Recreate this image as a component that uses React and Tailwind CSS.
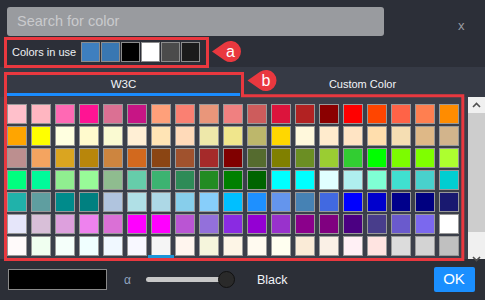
import React from "react";

const ROWS = [
  ["#FFC0CB","#FFB6C1","#FF69B4","#FF1493","#DB7093","#C71585","#FFA07A","#FA8072","#E9967A","#F08080","#CD5C5C","#DC143C","#B22222","#8B0000","#FF0000","#FF4500","#FF6347","#FF7F50","#FF8C00"],
  ["#FFA500","#FFFF00","#FFFFE0","#FFFACD","#FAFAD2","#FFEFD5","#FFE4B5","#FFDAB9","#EEE8AA","#F0E68C","#BDB76B","#FFD700","#FFF8DC","#FFEBCD","#FFE4C4","#FFDEAD","#F5DEB3","#DEB887","#D2B48C"],
  ["#BC8F8F","#F4A460","#DAA520","#B8860B","#CD853F","#D2691E","#8B4513","#A0522D","#A52A2A","#800000","#556B2F","#808000","#6B8E23","#9ACD32","#32CD32","#00FF00","#7CFC00","#7FFF00","#ADFF2F"],
  ["#00FF7F","#00FA9A","#90EE90","#98FB98","#8FBC8F","#66CDAA","#3CB371","#2E8B57","#228B22","#008000","#006400","#00FFFF","#00FFFF","#E0FFFF","#AFEEEE","#7FFFD4","#40E0D0","#48D1CC","#00CED1"],
  ["#20B2AA","#5F9EA0","#008B8B","#008080","#B0C4DE","#B0E0E6","#ADD8E6","#87CEEB","#87CEFA","#00BFFF","#1E90FF","#6495ED","#4682B4","#4169E1","#0000FF","#0000CD","#00008B","#000080","#191970"],
  ["#E6E6FA","#D8BFD8","#DDA0DD","#EE82EE","#DA70D6","#FF00FF","#FF00FF","#BA55D3","#9370DB","#8A2BE2","#9400D3","#9932CC","#8B008B","#800080","#4B0082","#483D8B","#6A5ACD","#7B68EE","#FFFFFF"],
  ["#FFFAFA","#F0FFF0","#F5FFFA","#F0FFFF","#F0F8FF","#F8F8FF","#F5F5F5","#FFF5EE","#F5F5DC","#FDF5E6","#FFFAF0","#FFFFF0","#FAEBD7","#FAF0E6","#FFF0F5","#FFE4E1","#DCDCDC","#D3D3D3","#C0C0C0"],
  ["#A9A9A9","#808080","#696969","#778899","#708090","#2F4F4F","#000000","#A9A9A9","#808080","#696969","#778899","#708090","#2F4F4F","#000000","#A9A9A9","#808080","#696969","#778899","#708090"],
];

const IN_USE = ["#3e7fbf", "#3977b2", "#000000", "#ffffff", "#4b4b4b", "#1b1b1b"];

function Badge({ cx, cy, r, label }) {
  const tip = cx - 18.5;
  const cos = r / 18.5;
  const sin = Math.sqrt(1 - cos * cos);
  const px = cx - r * cos;
  const y1 = cy - r * sin;
  const y2 = cy + r * sin;
  return (
    <g>
      <path
        d={`M${tip} ${cy} L${px} ${y1} A${r} ${r} 0 1 1 ${px} ${y2} Z`}
        fill="#e9383f"
      />
      <text
        x={cx}
        y={cy + 5.5}
        textAnchor="middle"
        fill="#ffffff"
        fontSize="16"
        fontFamily="'Liberation Sans', Arial, sans-serif"
      >
        {label}
      </text>
    </g>
  );
}

export default function App() {
  return (
    <div className="relative w-[485px] h-[300px] overflow-hidden bg-[#2c2f38] font-['Liberation_Sans',Arial,sans-serif]">
      {/* search row */}
      <div className="h-[36px] flex items-start pt-[7px] pl-[7px]">
        <div className="w-[377px] h-[29px] rounded-[3px] bg-[#999b9f] flex items-center pl-[10px] text-[14.5px] text-[#c9cacd]">
          Search for color
        </div>
        <div className="ml-[74px] mt-[12px] text-[13px] leading-[13px] text-[#9a9ca3]">x</div>
      </div>

      {/* colors in use */}
      <div className="h-[31px] flex items-start pt-[6px] pl-[12px]">
        <span className="text-[11px] leading-[20px] text-[#eef0f4]">Colors in use</span>
        <div className="ml-[5px] flex gap-[1px]">
          {IN_USE.map((c, i) => (
            <div
              key={i}
              className="w-[19px] h-[20px] border border-[#8c8c8c]"
              style={{ backgroundColor: c }}
            />
          ))}
        </div>
      </div>

      {/* tabs */}
      <div className="h-[30px] bg-[#363a45] flex pl-[7px]">
        <div className="relative w-[233px] pt-[10px] text-center text-[11.5px] leading-[14px] text-[#f2f4f8]">
          W3C
          <div className="absolute left-0 right-0 bottom-[1px] h-[3px] bg-[#1a8cff]" />
        </div>
        <div className="flex-1 pt-[10px] text-center text-[11px] leading-[14px] text-[#f2f4f8]">
          Custom Color
        </div>
      </div>

      {/* grid + scrollbar */}
      <div className="h-[162px] flex bg-[#3b3f4a]">
        <div className="w-[468px] h-full overflow-hidden pl-[7px] pt-[7px]">
          <div className="grid grid-cols-[repeat(19,20px)] gap-x-[4px] gap-y-[2px]">
            {ROWS.flatMap((row, ri) =>
              row.map((c, ci) => (
                <div
                  key={`${ri}-${ci}`}
                  className={
                    ri === 7 && ci === 6
                      ? "w-[20px] h-[20px] border border-[#999999] outline-[3px] outline-solid outline-[#1c95d8]"
                      : "w-[20px] h-[20px] border border-[#999999]"
                  }
                  style={{ backgroundColor: c }}
                />
              ))
            )}
          </div>
        </div>
        <div className="w-[17px] h-full flex flex-col bg-[#f0f0f0]">
          <div className="h-[16px] flex items-center justify-center">
            <svg width="9" height="6" viewBox="0 0 9 6">
              <path d="M1 5 L4.5 1.5 L8 5" stroke="#505050" strokeWidth="1.6" fill="none" />
            </svg>
          </div>
          <div className="h-[119px] bg-[#cdcdcd]" />
          <div className="relative flex-1">
            <svg className="absolute left-[4px] bottom-[-3px]" width="9" height="6" viewBox="0 0 9 6">
              <path d="M1 1 L4.5 4.5 L8 1" stroke="#505050" strokeWidth="1.6" fill="none" />
            </svg>
          </div>
        </div>
      </div>

      {/* bottom bar */}
      <div className="h-[41px] flex items-center pl-[8px] bg-[#2c2f37]">
        <div className="w-[99px] h-[21px] bg-black border border-[#8a8a8a]" />
        <span className="ml-[17px] text-[12px] leading-[12px] text-[#8fa3bf]">α</span>
        <div className="relative ml-[15px] w-[91px] h-[17px] flex items-center">
          <div className="w-[82px] h-[5px] rounded-full bg-[#c8c8c8]" />
          <div className="absolute left-[72px] top-0 w-[17px] h-[17px] rounded-full bg-[#2a2a2a] border border-[#111111]" />
        </div>
        <span className="ml-[20px] text-[12.5px] leading-[14px] text-[#f2f4f8]">Black</span>
        <div className="ml-[146px] w-[41px] h-[25px] rounded-[2px] bg-[#1a8fff] flex items-center justify-center text-[15px] text-white">
          OK
        </div>
      </div>

      {/* annotations */}
      <svg className="absolute inset-0 pointer-events-none" width="485" height="300" viewBox="0 0 485 300">
        <rect x="5.5" y="38.5" width="202" height="28" fill="none" stroke="#e9383f" strokeWidth="3" />
        <polygon
          points="5.5,73.5 242.5,73.5 242.5,95.8 462.8,95.8 462.8,259.5 5.5,259.5"
          fill="none"
          stroke="#e9383f"
          strokeWidth="3"
        />
        <Badge cx={230.5} cy={51.5} r={10.5} label="a" />
        <Badge cx={266} cy={80.5} r={10.5} label="b" />
      </svg>
    </div>
  );
}
